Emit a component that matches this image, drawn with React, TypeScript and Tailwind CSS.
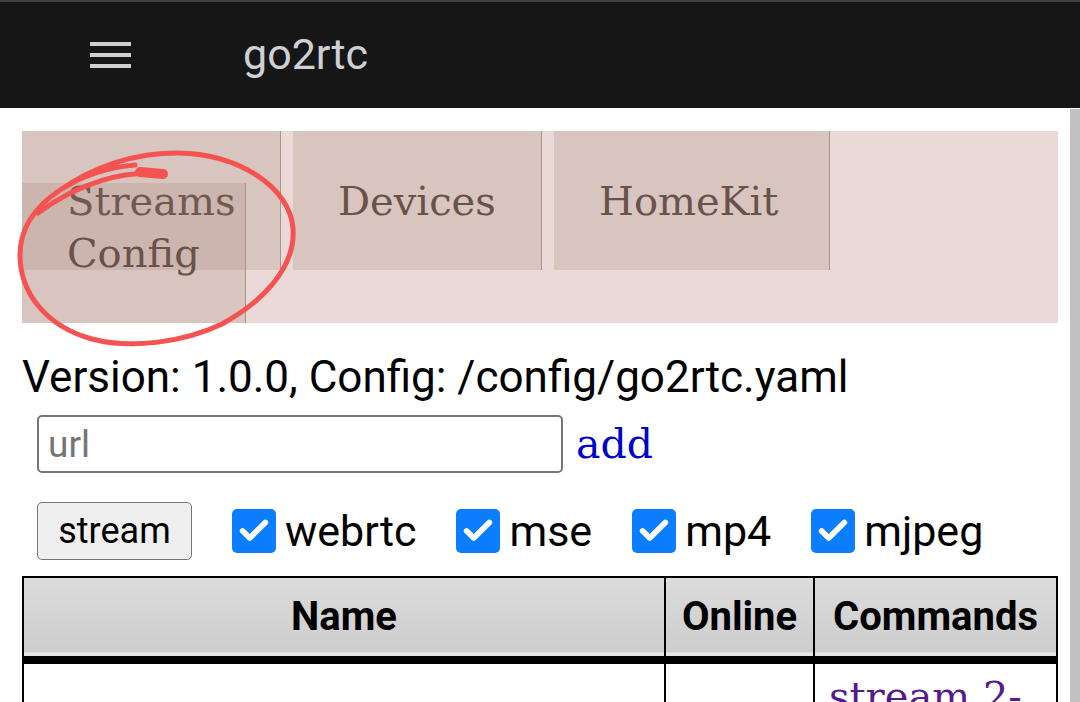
import { Check } from 'lucide-react'

const roboto = { fontFamily: 'Roboto, "Liberation Sans", sans-serif' }

function Tab({ label, w }: { label: string; w: string }) {
  return (
    <div
      className={`${w} h-[139px] shrink-0 flex items-center px-[45px] bg-[#957a68]/20 border-r border-[#a8948c] text-[40px] text-[#685249] font-['DejaVu_Serif',serif] leading-none`}
    >
      {label}
    </div>
  )
}

function Checkbox({ label }: { label: string }) {
  return (
    <label className="flex items-center gap-[9px]">
      <span className="w-[44px] h-[44px] rounded-[5px] bg-[#0b7dff] flex items-center justify-center">
        <Check className="w-[34px] h-[34px] text-white" strokeWidth={4} />
      </span>
      <span className="text-[43px] text-black leading-none">{label}</span>
    </label>
  )
}

export default function App() {
  return (
    <div className="relative w-[1080px] h-[702px] overflow-hidden bg-white" style={roboto}>
      <header className="h-[108px] bg-[#161616] border-t-2 border-[#3c3f43] flex items-center">
        <div className="ml-[90px] w-[41px] flex flex-col gap-[7px]">
          <span className="h-[4px] bg-[#cfd0d4]" />
          <span className="h-[4px] bg-[#cfd0d4]" />
          <span className="h-[4px] bg-[#cfd0d4]" />
        </div>
        <h1 className="ml-[112px] text-[43px] text-[#cdd0d5] leading-none pb-[2px]">go2rtc</h1>
      </header>

      <main className="pl-[22px] pr-[22px] pt-[23px]">
        <nav className="relative h-[192px] bg-[#ead9d6] flex items-start gap-[12px]">
          <Tab label="Streams" w="w-[259px]" />
          <Tab label="Devices" w="w-[249px]" />
          <Tab label="HomeKit" w="w-[276px]" />
          <div className="absolute left-0 top-[52px] w-[224px] h-[140px] flex items-center px-[45px] bg-[#957a68]/20 border-r border-[#a8948c] text-[40px] text-[#685249] font-['DejaVu_Serif',serif] leading-none">
            Config
          </div>
        </nav>

        <p className="mt-[30px] text-[44px] leading-[48px] text-black">
          Version: 1.0.0, Config: /config/go2rtc.yaml
        </p>

        <div className="mt-[14px] ml-[15px] flex items-center gap-[13px]">
          <input
            placeholder="url"
            className="w-[526px] h-[58px] border-2 border-[#767676] rounded-[5px] px-[9px] text-[37px] placeholder:text-[#757575] outline-none"
          />
          <a href="#" className="text-[41px] text-[#0000cc] font-['DejaVu_Serif',serif] leading-none">
            add
          </a>
        </div>

        <div className="mt-[29px] ml-[15px] flex items-center gap-[40px]">
          <button className="w-[155px] h-[58px] bg-[#efefef] border border-[#767676] rounded-[5px] text-[36px] text-black">
            stream
          </button>
          <Checkbox label="webrtc" />
          <Checkbox label="mse" />
          <Checkbox label="mp4" />
          <Checkbox label="mjpeg" />
        </div>

        <table className="mt-[16px] w-full border-collapse border-2 border-black">
          <thead>
            <tr className="h-[83px] bg-gradient-to-b from-[#dcdcdc] to-[#cdcdcd] border-b-[8px] border-black text-[40px] font-bold">
              <th className="w-[642px] border-2 border-black shadow-[inset_0_-3px_0_#e6e6e6]">Name</th>
              <th className="w-[149px] border-2 border-black shadow-[inset_0_-3px_0_#e6e6e6]">Online</th>
              <th className="border-2 border-black shadow-[inset_0_-3px_0_#e6e6e6]">Commands</th>
            </tr>
          </thead>
          <tbody>
            <tr className="h-[120px]">
              <td className="border-2 border-black" />
              <td className="border-2 border-black" />
              <td className="border-2 border-black align-top pt-[8px] pl-[14px] leading-[48px]">
                <a href="#" className="text-[40px] text-[#551a8b] font-['DejaVu_Serif',serif]">
                  stream 2-
                </a>
              </td>
            </tr>
          </tbody>
        </table>
      </main>

      {/* red hand-drawn annotation */}
      <svg className="absolute left-0 top-0 pointer-events-none" width="320" height="360" viewBox="0 0 320 360">
        <g fill="none" stroke="#f55252" strokeLinecap="round" strokeLinejoin="round">
          <path d="M163 174 C125 170 80 182 38 213" strokeWidth="5" />
          <path d="M140 172 L163 174" strokeWidth="10" />
          <path
            d="M60 190 C95 166 135 153 178 153 C240 154 290 188 293 228 C296 268 262 302 222 324 C182 343 130 349 92 339 C45 326 20 292 20 255 C20 228 36 206 60 190 C85 174 110 167 135 165"
            strokeWidth="5"
          />
        </g>
      </svg>

      {/* scrollbar */}
      <div className="absolute right-0 top-[109px] bottom-0 w-[10px] bg-[#c1c1c1]" />
    </div>
  )
}
